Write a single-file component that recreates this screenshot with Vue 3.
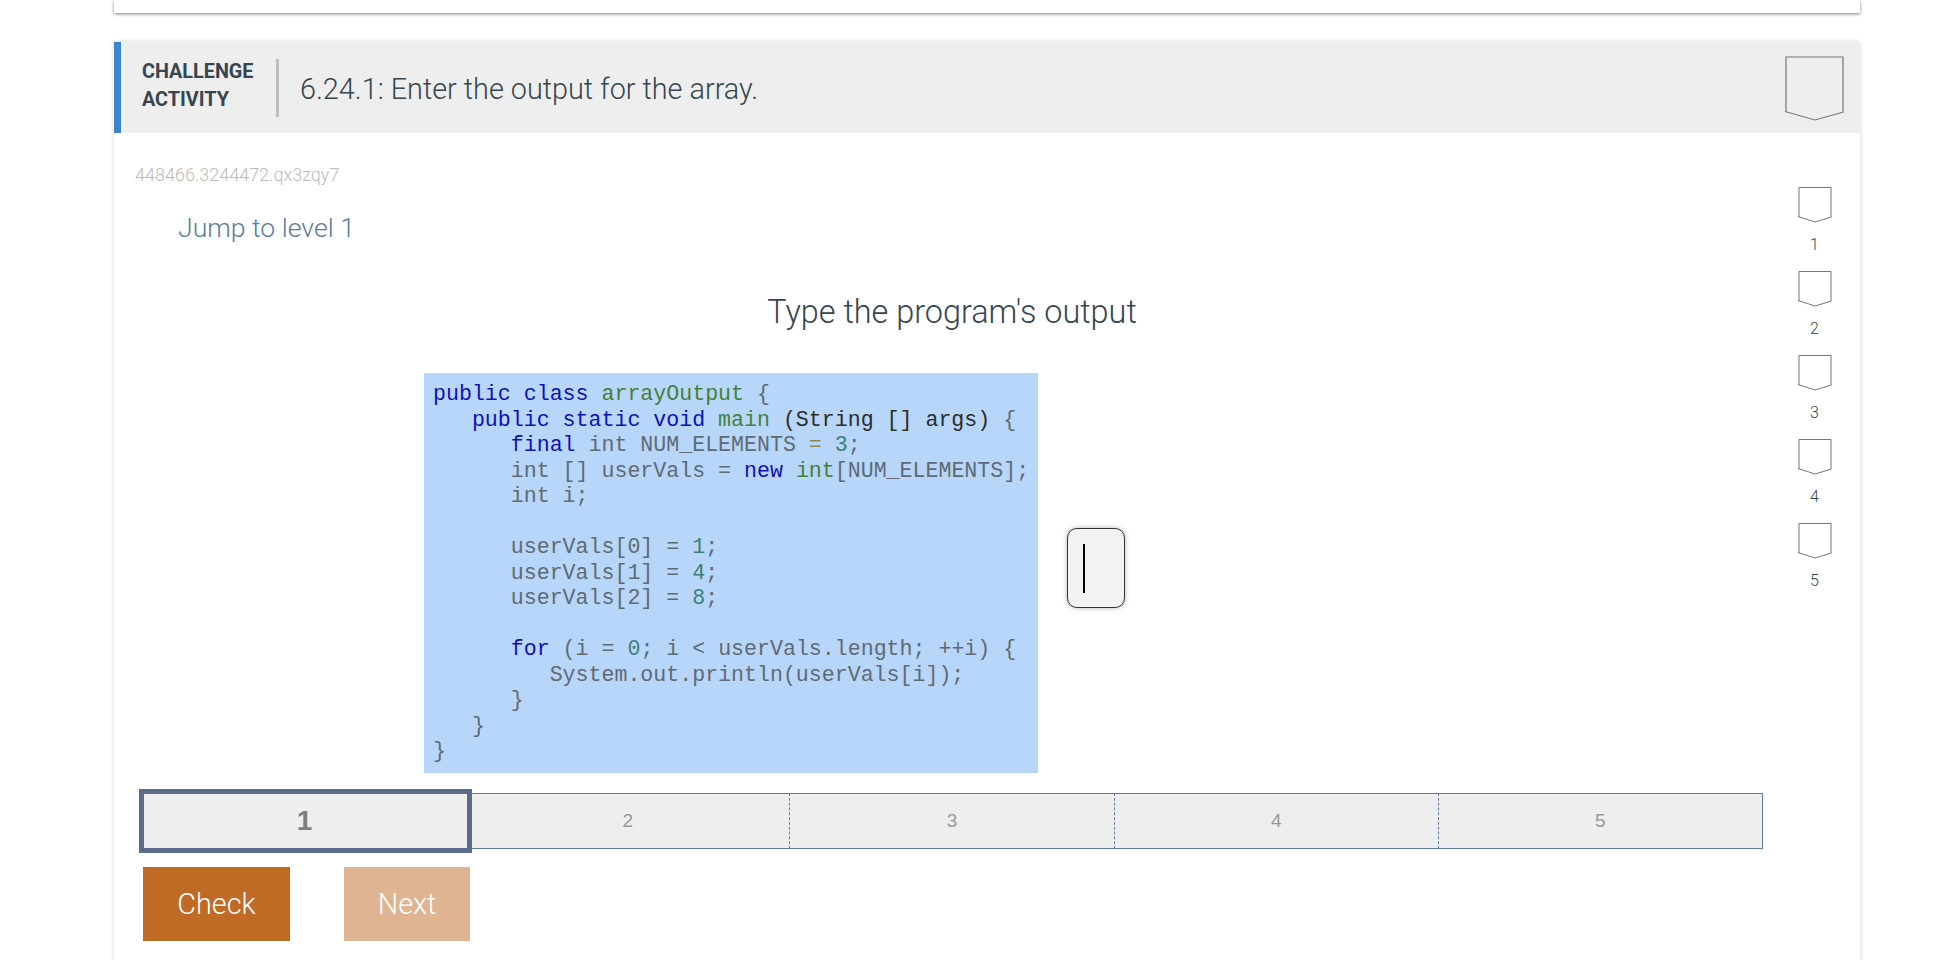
<script setup>
const code = [
  [['k','public class '],['t','arrayOutput '],['g','{']],
  [['n','   '],['k','public static void '],['t','main '],['d','(String [] args) '],['g','{']],
  [['n','      '],['k','final '],['g','int NUM_ELEMENTS '],['o','= '],['c','3'],['g',';']],
  [['n','      '],['g','int [] userVals = '],['k','new '],['t','int'],['g','[NUM_ELEMENTS];']],
  [['n','      '],['g','int i;']],
  [['n',' ']],
  [['n','      '],['g','userVals[0] = '],['c','1'],['g',';']],
  [['n','      '],['g','userVals[1] = '],['c','4'],['g',';']],
  [['n','      '],['g','userVals[2] = '],['c','8'],['g',';']],
  [['n',' ']],
  [['n','      '],['k','for '],['g','(i = '],['c','0'],['g','; i < userVals.length; ++i) {']],
  [['n','         '],['g','System.out.println(userVals[i]);']],
  [['n','      '],['g','}']],
  [['n','   '],['g','}']],
  [['g','}']]
]
const levels = [1, 2, 3, 4, 5]
</script>

<template>
  <div class="page">
    <div class="top-card"></div>
    <section class="card">
      <header class="head">
        <div class="kind">CHALLENGE<br />ACTIVITY</div>
        <h1 class="title">6.24.1: Enter the output for the array.</h1>
        <svg class="shield-big" viewBox="0 0 60 66" width="60" height="66" aria-hidden="true">
          <path d="M1 56V1H58V56M0 55.500L30 64L58.500 56" fill="none" stroke="#777" stroke-width="1.200" />
        </svg>
      </header>
      <div class="body">
        <div class="main">
          <div class="uid">448466.3244472.qx3zqy7</div>
          <div class="jump">Jump to level 1</div>
          <h2 class="prompt">Type the program's output</h2>
          <div class="exercise">
            <pre class="code"><div v-for="(line, i) in code" :key="i" class="line"><span v-for="(tok, j) in line" :key="j" :class="tok[0]">{{ tok[1] }}</span></div></pre>
            <div class="answer"><span class="caret"></span></div>
          </div>
          <div class="steps">
            <div v-for="n in levels" :key="n" class="step" :class="{ active: n === 1 }">{{ n }}</div>
          </div>
          <div class="actions">
            <button class="btn check">Check</button>
            <button class="btn next">Next</button>
          </div>
        </div>
        <aside class="side">
          <div v-for="n in levels" :key="n" class="level">
            <svg viewBox="0 0 34 36" width="34" height="36" aria-hidden="true">
              <path d="M1 30V0.500H33V30M0 29.500L17 35L33.500 30" fill="none" stroke="#777" stroke-width="1" />
            </svg>
            <span>{{ n }}</span>
          </div>
        </aside>
      </div>
    </section>
  </div>
</template>

<style>
html, body { margin: 0; background: #fff; overflow: hidden; }
</style>

<style scoped>
.page {
  width: 1948px;
  height: 960px;
  overflow: hidden;
  padding-left: 114px;
  box-sizing: border-box;
  font-family: Roboto, sans-serif;
  color: #36454f;
}
.top-card {
  width: 1746px;
  height: 13px;
  background: #fff;
  box-shadow: 0 1px 3px rgba(0,0,0,.5);
  margin-bottom: 29px;
}
.card {
  width: 1746px;
  min-height: 960px;
  background: #fff;
  box-shadow: 0 0 4px rgba(0,0,0,.18);
}
.head {
  height: 91px;
  background: #eee;
  border-left: 7px solid #3a85cd;
  box-sizing: border-box;
  display: flex;
  align-items: center;
  padding-left: 21px;
}
.kind {
  flex: 0 0 134px;
  padding-bottom: 3px;
  font-size: 19.800px;
  font-weight: 700;
  line-height: 28px;
  color: #36454f;
}
.title {
  margin: 0;
  border-left: 3px solid #bdbdbd;
  height: 58px;
  line-height: 60px;
  padding-left: 21px;
  font-size: 28.800px;
  font-weight: 300;
  color: #36454f;
}
.shield-big { margin-left: auto; margin-right: 15px; margin-top: 3px; }
.body { display: flex; }
.main { flex: 1; padding-left: 21px; min-width: 0; }
.uid {
  margin-top: 32px;
  font-size: 18px;
  font-weight: 300;
  line-height: 20px;
  color: #bbb;
}
.jump {
  margin-top: 26px;
  margin-left: 43px;
  font-size: 26.600px;
  font-weight: 300;
  line-height: 34px;
  color: #5b7ba0;
}
.prompt {
  margin: 47px 0 0;
  width: 1634px;
  text-align: center;
  font-size: 32.400px;
  font-weight: 300;
  line-height: 40px;
  color: #36454f;
}
.exercise {
  display: flex;
  align-items: flex-start;
  margin: 41px 0 0 289px;
  gap: 29px;
}
.code {
  margin: 0;
  width: 614px;
  height: 400px;
  padding: 9px 0 0 9px;
  box-sizing: border-box;
  background: #b8d6fa;
  font-family: "Liberation Mono", monospace;
  font-size: 21.600px;
  line-height: 25.500px;
}
.line { height: 25.500px; white-space: pre; }
.k { color: #1010b4; }
.t { color: #44803a; }
.g { color: #5f6a74; }
.d { color: #2c2c2c; }
.o { color: #8c8c44; }
.c { color: #3a8078; }
.answer {
  margin-top: 155px;
  width: 58px;
  height: 80px;
  box-sizing: border-box;
  background: #f2f2f2;
  border: 1px solid #333;
  border-radius: 10px;
  box-shadow: 0 0 5px rgba(0,0,0,.3);
  padding: 15px 0 0 15px;
}
.caret { display: block; width: 2px; height: 49px; background: #000; }
.steps {
  display: grid;
  grid-template-columns: repeat(5, 1fr);
  height: 56px;
  margin-top: 20px;
  margin-left: 7px;
  width: 1621px;
}
.step {
  box-sizing: border-box;
  background: #eee;
  border-top: 1px solid #5b7ba9;
  border-bottom: 1px solid #5b7ba9;
  border-right: 1px dashed #5b7ba9;
  display: flex;
  align-items: center;
  justify-content: center;
  font-family: "Liberation Sans", sans-serif;
  font-size: 19px;
  color: #999;
}
.step:last-child { border-right: 1px solid #5b7ba9; }
.step.active {
  position: relative;
  margin: -4px -6px -4px -3px;
  border: 5px solid #5b6b8c;
  padding-right: 2px;
  font-size: 28px;
  font-weight: 700;
  color: #7f7f7f;
}
.actions { display: flex; gap: 54px; margin-top: 18px; margin-left: 8px; }
.btn {
  height: 74px;
  border: 0;
  padding: 0;
  color: #fff;
  font-family: Roboto, sans-serif;
  font-weight: 300;
  font-size: 28.800px;
}
.check { width: 147px; background: #bf6a25; }
.next { width: 126px; background: #dfb492; }
.side {
  flex: 0 0 91px;
  padding-top: 54px;
  display: flex;
  flex-direction: column;
  align-items: center;
}
.level {
  height: 84px;
  display: flex;
  flex-direction: column;
  align-items: center;
  font-size: 16px;
  font-weight: 300;
  color: #36454f;
}
.level span { margin-top: 12px; line-height: 20px; }
</style>
